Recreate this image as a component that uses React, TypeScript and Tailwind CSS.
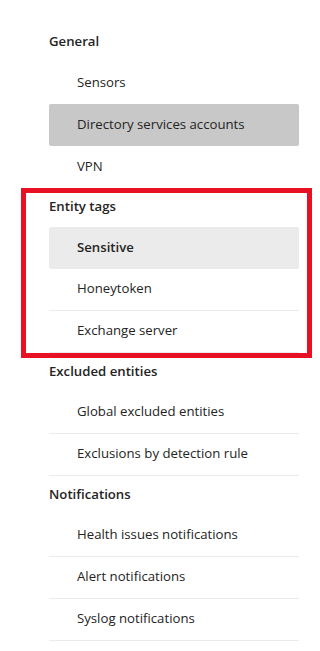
type Item = { label: string; state?: "hover" | "selected"; divider?: boolean };
type Section = { title: string; items: Item[] };

const sections: Section[] = [
  {
    title: "General",
    items: [
      { label: "Sensors" },
      { label: "Directory services accounts", state: "hover" },
      { label: "VPN" },
    ],
  },
  {
    title: "Entity tags",
    items: [
      { label: "Sensitive", state: "selected" },
      { label: "Honeytoken", divider: true },
      { label: "Exchange server", divider: true },
    ],
  },
  {
    title: "Excluded entities",
    items: [
      { label: "Global excluded entities", divider: true },
      { label: "Exclusions by detection rule", divider: true },
    ],
  },
  {
    title: "Notifications",
    items: [
      { label: "Health issues notifications", divider: true },
      { label: "Alert notifications", divider: true },
      { label: "Syslog notifications", divider: true },
    ],
  },
];

function NavItem({ item }: { item: Item }) {
  let cls = "flex h-[42px] items-center pl-7 pb-px rounded-[2px]";
  if (item.state === "hover") cls += " bg-[#c8c8c8]";
  if (item.state === "selected") cls += " bg-[#ebebeb] font-semibold";
  if (item.divider) cls += " border-b border-[#ebebeb] rounded-none";
  return <div className={cls}>{item.label}</div>;
}

export default function App() {
  return (
    <div
      className="relative h-[651px] w-[319px] overflow-hidden bg-white text-[13.2px] text-[#252423]"
      style={{ fontFamily: '"Open Sans", "Noto Sans", sans-serif' }}
    >
      <nav className="ml-[49px] w-[250px] pt-[23px]">
        {sections.map((s) => (
          <div key={s.title}>
            <div className="flex h-[39px] items-center pb-px font-semibold">{s.title}</div>
            {s.items.map((it) => (
              <NavItem key={it.label} item={it} />
            ))}
          </div>
        ))}
      </nav>

      {/* annotation highlight */}
      <div className="pointer-events-none absolute left-[21px] top-[188px] h-[170px] w-[291px] border-[5px] border-[#e81123]" />
    </div>
  );
}
